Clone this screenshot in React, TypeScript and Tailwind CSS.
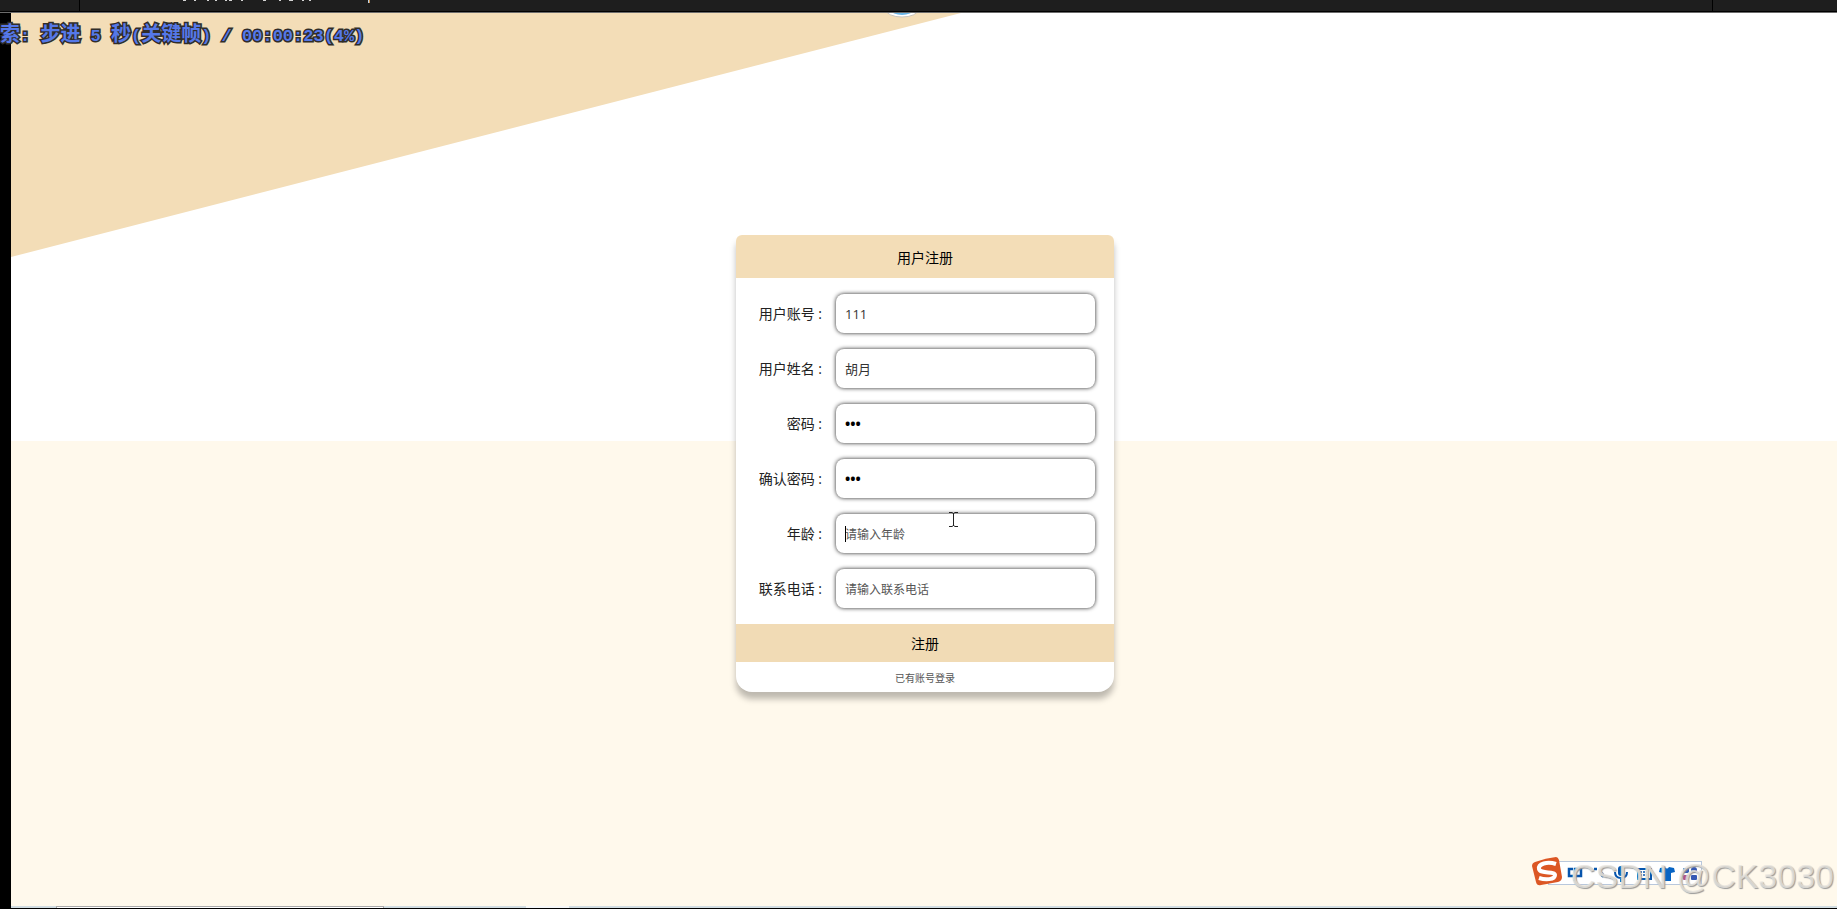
import React from "react";

type Field = { id: string; label: string; type: string; value: string; placeholder: string; caret?: boolean };

const fields: Field[] = [
  { id: "account", label: "用户账号", type: "text", value: "111", placeholder: "请输入用户账号" },
  { id: "name", label: "用户姓名", type: "text", value: "胡月", placeholder: "请输入用户姓名" },
  { id: "password", label: "密码", type: "password", value: "111", placeholder: "请输入密码" },
  { id: "confirm", label: "确认密码", type: "password", value: "111", placeholder: "请输入确认密码" },
  { id: "age", label: "年龄", type: "text", value: "", placeholder: "请输入年龄", caret: true },
  { id: "phone", label: "联系电话", type: "text", value: "", placeholder: "请输入联系电话" },
];

function TitleBar() {
  return (
    <header className="relative flex h-[13px] shrink-0 overflow-hidden border-b border-[#6b6b6b] bg-[#1e1e1e]">
      <div className="w-20 border-r border-black" />
      <div className="flex-1" />
      <div className="w-[125px] border-l border-black" />
      <svg className="absolute left-0 top-0" width="400" height="4" aria-hidden="true">
        <path
          d="M183 .5h3M194 .5h2M207 .5h2M215 .5h2M225 .5h2M229 .5h3M241 .5h2M263 .5h3M279 .5h2M289 .5h4M302 .5h2M309 .5h2"
          stroke="#d4d4d4"
          strokeWidth="1"
          fill="none"
        />
        <path d="M368.5 0v3" stroke="#b9d2e8" />
        <path d="M369.5 0v3" stroke="#c98d4a" />
      </svg>
      <div className="absolute inset-x-0 bottom-0 h-px bg-black" />
    </header>
  );
}

function RegisterCard() {
  return (
    <form
      className="w-[378px] overflow-hidden rounded-t-md rounded-b-2xl bg-white shadow-[0_7px_6px_rgba(0,0,0,0.26)]"
      onSubmit={(e) => e.preventDefault()}
    >
      <h1 className="flex h-[43px] items-center justify-center bg-[#f3ddb7] text-sm text-black">用户注册</h1>
      <div className="flex flex-col gap-4 py-4 pr-[19px]">
        {fields.map((f) => (
          <div key={f.id} className="relative flex items-center">
            <label htmlFor={f.id} className="w-[86px] text-right text-sm whitespace-nowrap text-[#222]">
              {f.label}
              <span className="font-['Open_Sans']"> :</span>
            </label>
            <input
              id={f.id}
              type={f.type}
              defaultValue={f.value}
              placeholder={f.placeholder}
              className={
                "ml-[14px] h-[39px] min-w-0 flex-1 rounded-lg bg-white px-[9px] font-['Open_Sans','Noto_Sans_CJK_SC',sans-serif] shadow-[0_0_4px_#222] outline-none placeholder:text-xs placeholder:text-[#555] " +
                (f.type === "password" ? "text-sm font-bold text-black" : "text-[13px] text-[#333]")
              }
            />
            {f.caret && <span className="absolute left-[109px] h-4 w-px bg-black" />}
          </div>
        ))}
      </div>
      <button type="submit" className="h-[38px] w-full bg-[#f1dbb5] text-sm text-black">
        注册
      </button>
      <div className="flex h-[30px] items-center justify-center">
        <a href="#login" className="text-[10px] text-[#555]">
          已有账号登录
        </a>
      </div>
    </form>
  );
}

function InputMethodBar() {
  return (
    <div className="absolute right-[135px] bottom-5 h-8 w-[170px]" aria-hidden="true">
      <svg width="170" height="32" viewBox="0 0 170 32">
        <rect x="16.5" y="5.5" width="153" height="23" fill="#fff" stroke="#b9c8dc" />
        <path d="M3 6Q14 2 24 1q2 0 3 3l3 17q0 4-4 5L9 29q-4 1-5-3L0 10q0-3 3-4z" fill="#dc5724" />
        <path d="M24 8C15 5 6 8 7 13c1 5 16 2 16 6 0 5-10 5-16 3" fill="none" stroke="#fff" strokeWidth="4" />
        <g fill="none" stroke="#0755ad" strokeWidth="2.5">
          <path d="M41 13h-4v7h4M43 25V13h6v7h-6" />
          <path d="M62 13h3M69 17q3 1 1 4" />
          <path d="M83 16q0 6 6 6t6-6M89 22v4" strokeWidth="2" />
          <rect x="106" y="13" width="13" height="10" strokeWidth="2" />
          <path d="M108 16h9M108 19h9" strokeWidth="1.5" strokeDasharray="2 1" />
        </g>
        <rect x="86" y="10" width="6" height="10" rx="3" fill="#0755ad" />
        <path d="M128 12l5-1q2 3 4 0l5 1 1 4-4 1v8h-8v-8l-4-1z" fill="#0764c4" />
        <g fill="#3659b4">
          <rect x="151" y="12" width="6" height="5" rx="1" />
          <rect x="159" y="11" width="6" height="6" rx="3" />
          <rect x="151" y="19" width="6" height="5" rx="1" fill="#b45486" />
          <rect x="159" y="19" width="6" height="5" rx="1" />
        </g>
      </svg>
    </div>
  );
}

export default function App() {
  return (
    <div className="flex h-screen flex-col overflow-hidden bg-black font-['Noto_Sans_CJK_SC',sans-serif]">
      <TitleBar />
      <main className="relative ml-[11px] flex min-h-0 flex-1 flex-col">
        <div className="relative flex min-h-0 flex-1 items-center justify-center bg-[linear-gradient(#fff_428px,#fff9ec_428px)] pt-2 pl-[2px]">
          <svg className="absolute left-0 top-0" width="951" height="245" aria-hidden="true">
            <path d="M0 0H950L0 244z" fill="#f3ddb7" />
          </svg>
          <svg className="absolute left-[874px] top-0" width="36" height="6" aria-hidden="true">
            <ellipse cx="17" cy="-3" rx="16" ry="7" fill="#fff" stroke="#c9c5be" />
            <ellipse cx="17" cy="-3" rx="11" ry="5" fill="#69b4e5" />
          </svg>
          <RegisterCard />
          <svg className="absolute left-[936px] top-[498px]" width="12" height="18" aria-hidden="true">
            <path d="M2 1.5h3l1.5 1 1.5-1h3M6.5 2v13M2 15.5h3l1.5-1 1.5 1h3" stroke="#222" fill="none" />
          </svg>
        </div>
        <div className="flex h-[2px] shrink-0 bg-[#d2dde2]">
          <div className="ml-[45px] w-[328px] border border-b-0 border-[#aaa] bg-white" />
          <div className="ml-[142px] w-[43px] bg-[#f5f7f8]" />
        </div>
        <InputMethodBar />
      </main>
      <div className="h-px shrink-0 bg-black" />
      <p className="absolute top-[22px] left-0 font-['Liberation_Mono','Noto_Sans_CJK_SC',monospace] text-[17px] leading-6 font-bold whitespace-pre text-[#5578e8] [-webkit-text-stroke:3px_#302d29] [paint-order:stroke_fill]">
        <span className="text-xl">索</span>: <span className="text-xl">步进</span> 5 <span className="text-xl">秒</span>(
        <span className="text-xl">关键帧</span>) / 00:00:23(4%)
      </p>
      <p className="absolute right-[3px] bottom-[15px] font-['Liberation_Sans',sans-serif] text-[34px] leading-9 text-[#e8e5df]/80 [text-shadow:1px_1px_1px_#999]">
        CSDN @CK3030
      </p>
    </div>
  );
}
